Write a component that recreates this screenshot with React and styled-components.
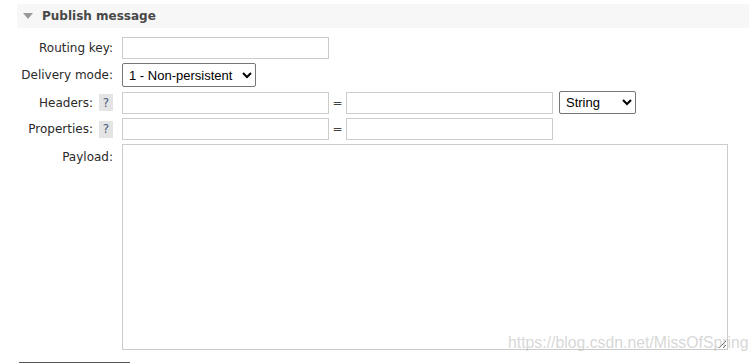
import React from "react";
import styled, { createGlobalStyle } from "styled-components";

const GlobalStyle = createGlobalStyle`
  body {
    margin: 0;
    background: #fff;
    font-family: "DejaVu Sans", Verdana, sans-serif;
    color: #333;
  }
`;

const Page = styled.div`
  position: relative;
  width: 756px;
  height: 363px;
  overflow: hidden;
  padding: 4px 0 0 17px;
  box-sizing: border-box;
`;

const SectionHeader = styled.div`
  display: flex;
  align-items: center;
  gap: 9px;
  width: 732px;
  height: 24px;
  padding-left: 6px;
  box-sizing: border-box;
  background: #f7f7f7;
`;

const Title = styled.h2`
  margin: 0;
  font-size: 12px;
  font-weight: bold;
  color: #484848;
`;

const Form = styled.div`
  display: grid;
  grid-template-columns: 96px auto;
  column-gap: 9px;
  row-gap: 4px;
  margin-top: 9px;
  align-items: center;
`;

const Label = styled.div`
  display: flex;
  justify-content: flex-end;
  align-items: center;
  align-self: ${(p) => (p.$top ? "start" : "center")};
  padding-top: ${(p) => (p.$top ? "6px" : "0")};
  font-size: 12px;
  color: #2a2a2a;
  white-space: nowrap;
`;

const Help = styled.span`
  display: inline-flex;
  align-items: center;
  justify-content: center;
  width: 14px;
  height: 17px;
  margin-left: 6px;
  background: #e4e4e4;
  color: #4b5a7c;
  font-size: 12px;
`;

const Field = styled.div`
  display: flex;
  align-items: center;
`;

const TextInput = styled.input`
  box-sizing: border-box;
  width: 207px;
  height: 22px;
  padding: 1px 3px;
  border: 1px solid #cccccc;
  border-radius: 0;
  font-family: "Liberation Sans", Arial, sans-serif;
  font-size: 13px;
  outline: none;
`;

const Equals = styled.span`
  width: 17px;
  text-align: center;
  font-size: 12px;
  color: #444;
`;

const Select = styled.select`
  box-sizing: border-box;
  width: ${(p) => p.$w}px;
  height: ${(p) => p.$h}px;
  margin-left: ${(p) => p.$ml || 0}px;
  border: 1px solid #767676;
  border-radius: 2px;
  background: #fff;
  color: #000;
  font-family: "Liberation Sans", Arial, sans-serif;
  font-size: 13px;
  padding: 0 2px;
`;

const Payload = styled.textarea`
  box-sizing: border-box;
  width: 606px;
  height: 206px;
  border: 1px solid #cccccc;
  border-radius: 0;
  outline: none;
  resize: both;
`;

const SubmitButton = styled.button`
  display: block;
  margin: 12px 0 0 2px;
  width: 111px;
  height: 24px;
  border: none;
  border-top: 2px solid #555;
  background: #fff;
`;

const Watermark = styled.div`
  position: absolute;
  left: 508px;
  top: 334px;
  font-family: "Liberation Sans", Arial, sans-serif;
  font-size: 15.8px;
  color: rgba(180, 180, 180, 0.55);
  pointer-events: none;
`;

const Arrow = () => (
  <svg width="10" height="6" viewBox="0 0 10 6">
    <path d="M0 0 L10 0 L5 6 Z" fill="#9a9a9a" />
  </svg>
);

export default function App() {
  return (
    <>
      <GlobalStyle />
      <Page>
        <SectionHeader>
          <Arrow />
          <Title>Publish message</Title>
        </SectionHeader>
        <Form>
          <Label>Routing key:</Label>
          <Field>
            <TextInput type="text" />
          </Field>

          <Label>Delivery mode:</Label>
          <Field>
            <Select $w={134} $h={24} defaultValue="1">
              <option value="1">1 - Non-persistent</option>
              <option value="2">2 - Persistent</option>
            </Select>
          </Field>

          <Label>
            Headers:<Help>?</Help>
          </Label>
          <Field>
            <TextInput type="text" />
            <Equals>=</Equals>
            <TextInput type="text" />
            <Select $w={77} $h={23} $ml={6} defaultValue="string">
              <option value="string">String</option>
              <option value="number">Number</option>
              <option value="boolean">Boolean</option>
            </Select>
          </Field>

          <Label>
            Properties:<Help>?</Help>
          </Label>
          <Field>
            <TextInput type="text" />
            <Equals>=</Equals>
            <TextInput type="text" />
          </Field>

          <Label $top>Payload:</Label>
          <Field>
            <Payload />
          </Field>
        </Form>
        <SubmitButton />
        <Watermark>https://blog.csdn.net/MissOfSpring</Watermark>
      </Page>
    </>
  );
}
